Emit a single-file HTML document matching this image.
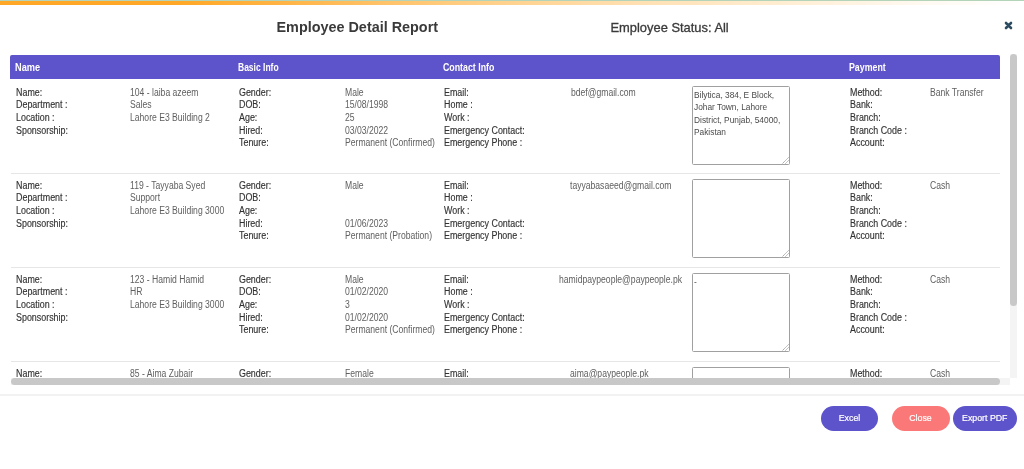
<!DOCTYPE html>
<html><head><meta charset="utf-8">
<style>
html,body{margin:0;padding:0;}
body{width:1024px;height:469px;overflow:hidden;background:#fff;position:relative;font-family:"Liberation Sans",sans-serif;}
.topg{position:absolute;left:0;top:0;width:1024px;height:1px;background:#b4d4b9;}
.topo{position:absolute;left:0;top:1px;width:1024px;height:4px;background:linear-gradient(to right,#ffa726 0%,#ffa726 17%,rgba(255,167,38,0.85) 28%,rgba(255,170,45,0.72) 37%,rgba(255,175,55,0.6) 47%,rgba(255,180,70,0.42) 62%,rgba(255,190,90,0.25) 78%,rgba(255,200,120,0.1) 90%,rgba(255,255,255,0) 100%);}
.title{position:absolute;left:276.5px;top:19px;font-size:14.4px;font-weight:bold;color:#3a3a3a;white-space:nowrap;line-height:17px;}
.status{position:absolute;left:610.5px;top:20px;font-size:12.9px;color:#3a3a3a;-webkit-text-stroke:0.3px #3a3a3a;white-space:nowrap;line-height:15px;}
.xbtn{position:absolute;left:1002.6px;top:19.5px;}
.scroll{position:absolute;left:0;top:0;width:1010px;height:378px;overflow:hidden;}
.thead{position:absolute;left:10px;top:55px;width:990px;height:24px;background:#5d53ca;border-radius:2px 2px 0 0;}
.th{position:absolute;top:1px;line-height:24px;font-size:10px;font-weight:bold;color:#fff;white-space:nowrap;transform-origin:0 0;}
.lb{position:absolute;font-size:10px;line-height:12.5px;color:#333;-webkit-text-stroke:0.15px #333;white-space:nowrap;transform:scaleX(0.89);transform-origin:0 0;}
.vl{position:absolute;font-size:10px;line-height:12.5px;color:#606060;white-space:nowrap;transform:scaleX(0.86);transform-origin:0 0;}
.sep{position:absolute;left:10.5px;width:989.5px;height:1px;background:#e6e6e6;}
.ta{position:absolute;left:692px;width:96px;height:77px;border:1px solid #a0a0a0;border-radius:1.5px;background:#fff;}
.tat{position:absolute;left:0.8px;top:1.5px;font-size:8.7px;line-height:12.6px;color:#4a4a4a;white-space:nowrap;transform:scaleX(0.96);transform-origin:0 0;}
.grip{position:absolute;right:0;bottom:0;}
.vtrack{position:absolute;left:1010px;top:54px;width:7px;height:324px;background:#f4f4f4;}
.vthumb{position:absolute;left:1010px;top:54px;width:7px;height:252px;background:#c8c8c8;border-radius:3.5px;}
.htrack{position:absolute;left:10.5px;top:378px;width:999.5px;height:7px;background:#f4f4f4;}
.hthumb{position:absolute;left:10.5px;top:378px;width:989.5px;height:7px;background:#c8c8c8;border-radius:3.5px;}
.foot{position:absolute;left:0;top:394px;width:1024px;height:2px;background:#f2f2f2;}
.btn{position:absolute;top:406px;height:25px;border-radius:12.5px;color:#fff;-webkit-text-stroke:0.2px #fff;font-size:8.8px;line-height:25px;text-align:center;}
.wrap{filter:blur(0.3px);position:absolute;left:0;top:0;width:1024px;height:469px;background:#fff;}
</style></head><body><div class="wrap">
<div class="topg"></div><div class="topo"></div>
<div class="title">Employee Detail Report</div>
<div class="status">Employee Status: All</div>
<svg class="xbtn" width="11" height="11" viewBox="0 0 11 11"><path d="M3 3L8 8M8 3L3 8" stroke="#2d4c62" stroke-width="2.6" stroke-linecap="round"/></svg>
<div class="scroll">
<div class="thead">
<div class="th" style="left:5.2px;transform:scaleX(0.92)">Name</div>
<div class="th" style="left:228.3px;transform:scaleX(0.85)">Basic Info</div>
<div class="th" style="left:432.5px;transform:scaleX(0.88)">Contact Info</div>
<div class="th" style="left:838.7px;transform:scaleX(0.88)">Payment</div>
</div>
<div class="lb" style="left:15.8px;top:87px">Name:</div><div class="lb" style="left:15.8px;top:99px">Department :</div><div class="lb" style="left:15.8px;top:112px">Location :</div><div class="lb" style="left:15.8px;top:125px">Sponsorship:</div>
<div class="vl" style="left:129.8px;top:87px">104 - laiba azeem</div><div class="vl" style="left:129.8px;top:99px">Sales</div><div class="vl" style="left:129.8px;top:112px">Lahore E3 Building 2</div>
<div class="lb" style="left:239.4px;top:87px">Gender:</div><div class="lb" style="left:239.4px;top:99px">DOB:</div><div class="lb" style="left:239.4px;top:112px">Age:</div><div class="lb" style="left:239.4px;top:125px">Hired:</div><div class="lb" style="left:239.4px;top:137px">Tenure:</div>
<div class="vl" style="left:344.6px;top:87px">Male</div><div class="vl" style="left:344.6px;top:99px">15/08/1998</div><div class="vl" style="left:344.6px;top:112px">25</div><div class="vl" style="left:344.6px;top:125px">03/03/2022</div><div class="vl" style="left:344.6px;top:137px">Permanent (Confirmed)</div>
<div class="lb" style="left:444px;top:87px">Email:</div><div class="lb" style="left:444px;top:99px">Home :</div><div class="lb" style="left:444px;top:112px">Work :</div><div class="lb" style="left:444px;top:125px">Emergency Contact:</div><div class="lb" style="left:444px;top:137px">Emergency Phone :</div>
<div class="vl" style="left:570.6px;top:87px">bdef@gmail.com</div>
<div class="ta" style="top:86px"><div class="tat">Bilytica, 384, E Block,<br>Johar Town, Lahore<br>District, Punjab, 54000,<br>Pakistan</div><svg class="grip" width="8" height="8" viewBox="0 0 8 8"><path d="M7.5 1.5L1.5 7.5M7.5 4.5L4.5 7.5" stroke="#8a8a8a" stroke-width="1" stroke-dasharray="1 0.6"/></svg></div>
<div class="lb" style="left:850.2px;top:87px">Method:</div><div class="lb" style="left:850.2px;top:99px">Bank:</div><div class="lb" style="left:850.2px;top:112px">Branch:</div><div class="lb" style="left:850.2px;top:125px">Branch Code :</div><div class="lb" style="left:850.2px;top:137px">Account:</div>
<div class="vl" style="left:929.9px;top:87px">Bank Transfer</div>
<div class="sep" style="top:173px"></div>
<div class="lb" style="left:15.8px;top:180px">Name:</div><div class="lb" style="left:15.8px;top:192px">Department :</div><div class="lb" style="left:15.8px;top:205px">Location :</div><div class="lb" style="left:15.8px;top:218px">Sponsorship:</div>
<div class="vl" style="left:129.8px;top:180px">119 - Tayyaba Syed</div><div class="vl" style="left:129.8px;top:192px">Support</div><div class="vl" style="left:129.8px;top:205px">Lahore E3 Building 3000</div>
<div class="lb" style="left:239.4px;top:180px">Gender:</div><div class="lb" style="left:239.4px;top:192px">DOB:</div><div class="lb" style="left:239.4px;top:205px">Age:</div><div class="lb" style="left:239.4px;top:218px">Hired:</div><div class="lb" style="left:239.4px;top:230px">Tenure:</div>
<div class="vl" style="left:344.6px;top:180px">Male</div><div class="vl" style="left:344.6px;top:218px">01/06/2023</div><div class="vl" style="left:344.6px;top:230px">Permanent (Probation)</div>
<div class="lb" style="left:444px;top:180px">Email:</div><div class="lb" style="left:444px;top:192px">Home :</div><div class="lb" style="left:444px;top:205px">Work :</div><div class="lb" style="left:444px;top:218px">Emergency Contact:</div><div class="lb" style="left:444px;top:230px">Emergency Phone :</div>
<div class="vl" style="left:570.2px;top:180px">tayyabasaeed@gmail.com</div>
<div class="ta" style="top:179px"><div class="tat"></div><svg class="grip" width="8" height="8" viewBox="0 0 8 8"><path d="M7.5 1.5L1.5 7.5M7.5 4.5L4.5 7.5" stroke="#8a8a8a" stroke-width="1" stroke-dasharray="1 0.6"/></svg></div>
<div class="lb" style="left:850.2px;top:180px">Method:</div><div class="lb" style="left:850.2px;top:192px">Bank:</div><div class="lb" style="left:850.2px;top:205px">Branch:</div><div class="lb" style="left:850.2px;top:218px">Branch Code :</div><div class="lb" style="left:850.2px;top:230px">Account:</div>
<div class="vl" style="left:929.9px;top:180px">Cash</div>
<div class="sep" style="top:267px"></div>
<div class="lb" style="left:15.8px;top:274px">Name:</div><div class="lb" style="left:15.8px;top:286px">Department :</div><div class="lb" style="left:15.8px;top:299px">Location :</div><div class="lb" style="left:15.8px;top:312px">Sponsorship:</div>
<div class="vl" style="left:129.8px;top:274px">123 - Hamid Hamid</div><div class="vl" style="left:129.8px;top:286px">HR</div><div class="vl" style="left:129.8px;top:299px">Lahore E3 Building 3000</div>
<div class="lb" style="left:239.4px;top:274px">Gender:</div><div class="lb" style="left:239.4px;top:286px">DOB:</div><div class="lb" style="left:239.4px;top:299px">Age:</div><div class="lb" style="left:239.4px;top:312px">Hired:</div><div class="lb" style="left:239.4px;top:324px">Tenure:</div>
<div class="vl" style="left:344.6px;top:274px">Male</div><div class="vl" style="left:344.6px;top:286px">01/02/2020</div><div class="vl" style="left:344.6px;top:299px">3</div><div class="vl" style="left:344.6px;top:312px">01/02/2020</div><div class="vl" style="left:344.6px;top:324px">Permanent (Confirmed)</div>
<div class="lb" style="left:444px;top:274px">Email:</div><div class="lb" style="left:444px;top:286px">Home :</div><div class="lb" style="left:444px;top:299px">Work :</div><div class="lb" style="left:444px;top:312px">Emergency Contact:</div><div class="lb" style="left:444px;top:324px">Emergency Phone :</div>
<div class="vl" style="left:558.6px;top:274px">hamidpaypeople@paypeople.pk</div>
<div class="ta" style="top:273px"><div class="tat">-</div><svg class="grip" width="8" height="8" viewBox="0 0 8 8"><path d="M7.5 1.5L1.5 7.5M7.5 4.5L4.5 7.5" stroke="#8a8a8a" stroke-width="1" stroke-dasharray="1 0.6"/></svg></div>
<div class="lb" style="left:850.2px;top:274px">Method:</div><div class="lb" style="left:850.2px;top:286px">Bank:</div><div class="lb" style="left:850.2px;top:299px">Branch:</div><div class="lb" style="left:850.2px;top:312px">Branch Code :</div><div class="lb" style="left:850.2px;top:324px">Account:</div>
<div class="vl" style="left:929.9px;top:274px">Cash</div>
<div class="sep" style="top:361px"></div>
<div class="lb" style="left:15.8px;top:368px">Name:</div><div class="lb" style="left:15.8px;top:380px">Department :</div><div class="lb" style="left:15.8px;top:393px">Location :</div><div class="lb" style="left:15.8px;top:406px">Sponsorship:</div>
<div class="vl" style="left:129.8px;top:368px">85 - Aima Zubair</div>
<div class="lb" style="left:239.4px;top:368px">Gender:</div><div class="lb" style="left:239.4px;top:380px">DOB:</div><div class="lb" style="left:239.4px;top:393px">Age:</div><div class="lb" style="left:239.4px;top:406px">Hired:</div><div class="lb" style="left:239.4px;top:418px">Tenure:</div>
<div class="vl" style="left:344.6px;top:368px">Female</div>
<div class="lb" style="left:444px;top:368px">Email:</div><div class="lb" style="left:444px;top:380px">Home :</div><div class="lb" style="left:444px;top:393px">Work :</div><div class="lb" style="left:444px;top:406px">Emergency Contact:</div><div class="lb" style="left:444px;top:418px">Emergency Phone :</div>
<div class="vl" style="left:570.2px;top:368px">aima@paypeople.pk</div>
<div class="ta" style="top:367px"><div class="tat"></div><svg class="grip" width="8" height="8" viewBox="0 0 8 8"><path d="M7.5 1.5L1.5 7.5M7.5 4.5L4.5 7.5" stroke="#8a8a8a" stroke-width="1" stroke-dasharray="1 0.6"/></svg></div>
<div class="lb" style="left:850.2px;top:368px">Method:</div><div class="lb" style="left:850.2px;top:380px">Bank:</div><div class="lb" style="left:850.2px;top:393px">Branch:</div><div class="lb" style="left:850.2px;top:406px">Branch Code :</div><div class="lb" style="left:850.2px;top:418px">Account:</div>
<div class="vl" style="left:929.9px;top:368px">Cash</div>

</div>
<div class="vtrack"></div><div class="vthumb"></div>
<div class="htrack"></div><div class="hthumb"></div>
<div class="foot"></div>
<div class="btn" style="left:821px;width:57px;background:#5d53ca">Excel</div>
<div class="btn" style="left:891.5px;width:58px;background:#fb7878">Close</div>
<div class="btn" style="left:952.5px;width:64.5px;background:#5d53ca">Export PDF</div>
</div></body></html>
